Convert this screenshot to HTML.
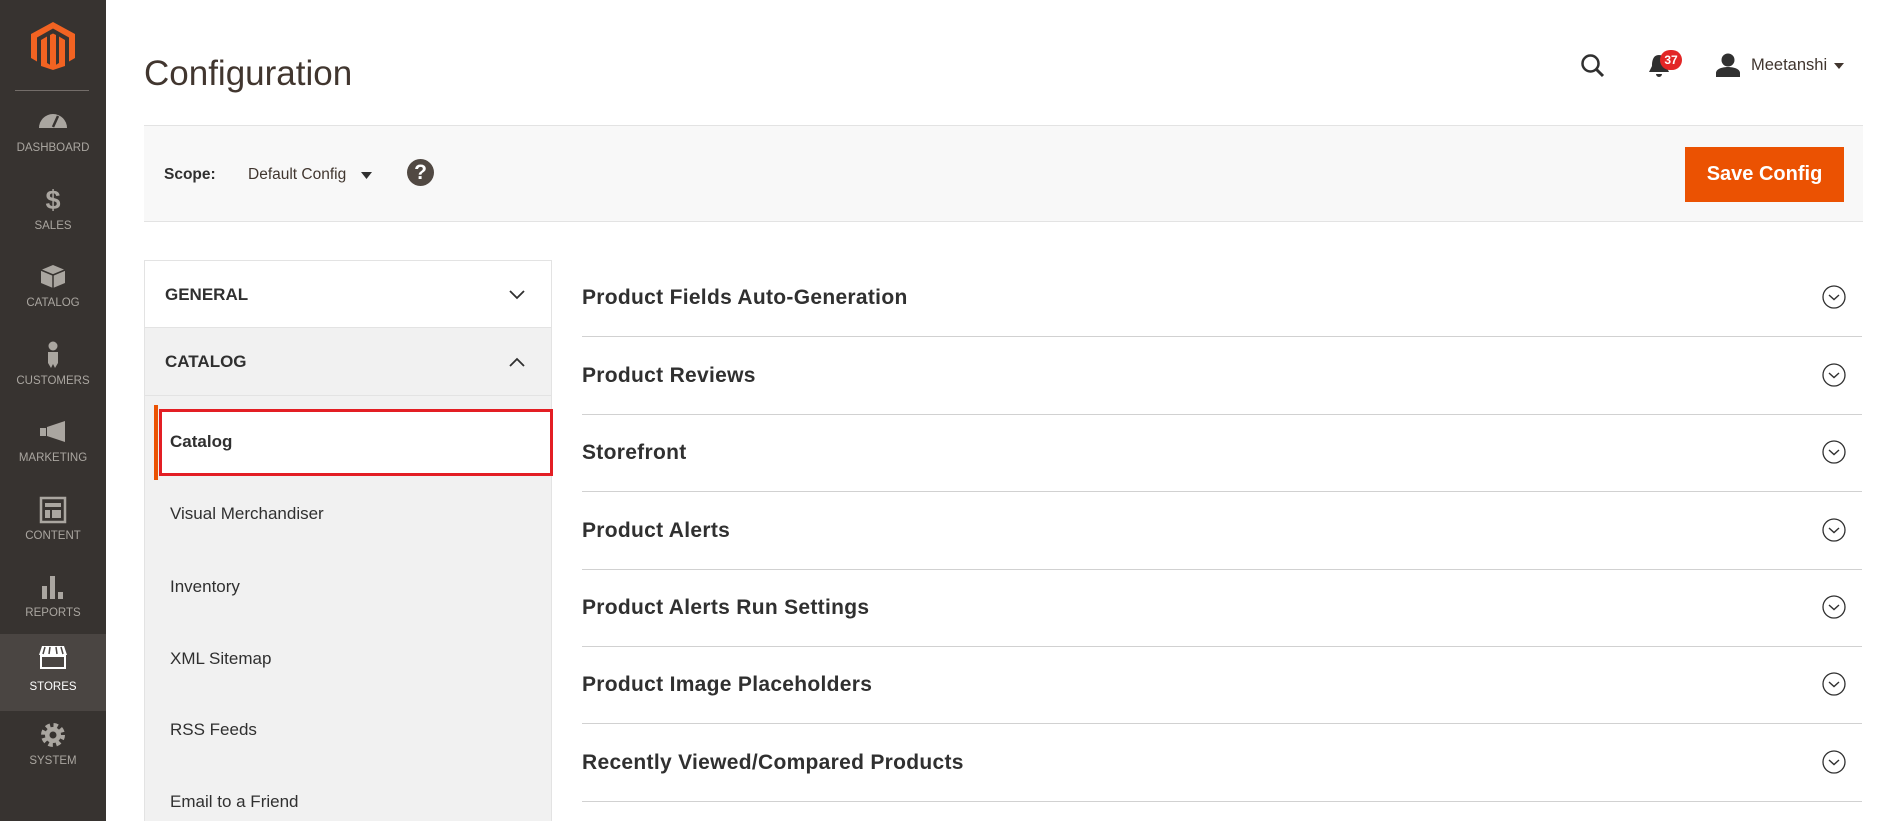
<!DOCTYPE html>
<html><head><meta charset="utf-8"><style>
*{margin:0;padding:0;box-sizing:border-box}
body{width:1886px;height:821px;overflow:hidden;background:#fff;font-family:"Liberation Sans",sans-serif;color:#303030;position:relative}
.sb{position:absolute;left:0;top:0;width:106px;height:821px;background:#373330}
.sep{position:absolute;left:15px;top:90px;width:74px;height:1px;background:#736d69}
.nav{position:absolute;left:0;width:106px;height:78px;text-align:center;color:#aaa6a0;font-size:11.5px}
.nav svg{position:absolute;left:38px;top:10px}
.nav span{position:absolute;left:0;right:0;bottom:22px}
.nav.act{background:#4a4542;color:#fff}
.nav.act span{bottom:18px}
.abs{position:absolute}
h1{position:absolute;left:144px;top:54px;font-size:35px;font-weight:normal;color:#41362f}
.bar{position:absolute;left:144px;top:125px;width:1719px;height:97px;background:#f8f8f8;border-top:1px solid #e3e3e3;border-bottom:1px solid #e3e3e3}
.btn{position:absolute;left:1685px;top:147px;width:159px;height:55px;background:#eb5202;color:#fff;font-size:20px;font-weight:bold;text-align:center;line-height:55px}
.lp{position:absolute;left:144px;top:260px;width:408px;height:561px;background:#f1f1f1;border:1px solid #e3e3e3;border-bottom:none}
.grp{position:absolute;left:0;width:406px;height:67px;font-weight:bold;font-size:17px;color:#303030;padding-left:20px;line-height:67px;border-bottom:1px solid #e3e3e3}
.sub{position:absolute;left:170px;font-size:17px;color:#303030}
.row{position:absolute;left:582px;width:1280px;border-bottom:1px solid #d1d1d1;height:78px}
.row b{position:absolute;left:0;top:39px;transform:translateY(-50%);font-size:21px;color:#303030;letter-spacing:.3px}
.row svg{position:absolute;right:16px;top:26px}
</style></head><body>
<div class="sb">
<svg class="abs" style="left:31px;top:22px" width="44" height="48" viewBox="0 0 44 48"><path d="M22 0L44 12V36L38 39.5V15.5L22 6.5L6 15.5V39.5L0 36V12Z" fill="#f26322"/><path d="M10 18L16 14.5V41L22 44.5L28 41V14.5L34 18V44L22 48L10 44Z" fill="#f26322"/><path d="M19 13L22 11.5L25 13V45L22 46.5L19 45Z" fill="#f26322"/></svg>
<div class="sep"></div>
<div class="nav" style="top:98px"><svg width="30" height="22" viewBox="0 0 30 22"><path d="M1 20A14 14 0 0 1 29 20Z" fill="#aaa6a0"/><path d="M15 19L20 8" stroke="#373330" stroke-width="2.5"/></svg><span>DASHBOARD</span></div>
<div class="nav" style="top:176px"><svg width="30" height="26" viewBox="0 0 30 26"><text x="15" y="23" text-anchor="middle" font-size="27" font-weight="bold" fill="#aaa6a0" font-family="Liberation Sans">$</text></svg><span>SALES</span></div>
<div class="nav" style="top:253px"><svg width="30" height="26" viewBox="0 0 30 26"><path d="M3 7L15 2L27 7V20L15 25L3 20Z" fill="#aaa6a0"/><path d="M3 7L15 12L27 7M15 12V25" stroke="#373330" stroke-width="1.5" fill="none"/></svg><span>CATALOG</span></div>
<div class="nav" style="top:331px"><svg width="30" height="28" viewBox="0 0 30 28"><circle cx="15" cy="5" r="4.5" fill="#aaa6a0"/><path d="M10 11H20V22L17 27L15 23L13 27L10 22Z" fill="#aaa6a0"/></svg><span>CUSTOMERS</span></div>
<div class="nav" style="top:408px"><svg width="30" height="26" viewBox="0 0 30 26"><path d="M2 10H8V18H2Z M9 9L27 3V24L9 18Z" fill="#aaa6a0"/></svg><span>MARKETING</span></div>
<div class="nav" style="top:486px"><svg width="30" height="28" viewBox="0 0 30 28"><rect x="3" y="2" width="24" height="24" fill="none" stroke="#aaa6a0" stroke-width="2.5"/><rect x="7" y="7" width="16" height="4" fill="#aaa6a0"/><rect x="7" y="14" width="5" height="8" fill="#aaa6a0"/><rect x="14" y="14" width="9" height="8" fill="#aaa6a0"/></svg><span>CONTENT</span></div>
<div class="nav" style="top:563px"><svg width="30" height="28" viewBox="0 0 30 28"><rect x="4" y="13" width="5" height="13" fill="#aaa6a0"/><rect x="12" y="3" width="5" height="23" fill="#aaa6a0"/><rect x="20" y="19" width="5" height="7" fill="#aaa6a0"/></svg><span>REPORTS</span></div>
<div class="nav act" style="top:634px;height:77px"><svg width="30" height="26" viewBox="0 0 30 26"><path d="M4 2H26L29 11H1Z" fill="#fff"/><path d="M7 3L5 10M12 3L11 10M18 3L19 10M23 3L25 10" stroke="#4a4542" stroke-width="1.5"/><path d="M3 12H27V24H3Z" fill="none" stroke="#fff" stroke-width="2"/></svg><span>STORES</span></div>
<div class="nav" style="top:711px"><svg width="30" height="28" viewBox="0 0 30 28"><circle cx="15" cy="14" r="9" fill="none" stroke="#aaa6a0" stroke-width="6" stroke-dasharray="4 3.1"/><circle cx="15" cy="14" r="8" fill="#aaa6a0"/><circle cx="15" cy="14" r="3.5" fill="#373330"/></svg><span>SYSTEM</span></div>
</div>

<h1>Configuration</h1>
<svg class="abs" style="left:1580px;top:53px" width="26" height="26" viewBox="0 0 26 26"><circle cx="10.5" cy="10.5" r="8" fill="none" stroke="#303030" stroke-width="2.5"/><path d="M16.5 16.5L23 23" stroke="#303030" stroke-width="3"/></svg>
<svg class="abs" style="left:1647px;top:53px" width="24" height="26" viewBox="0 0 24 26"><path d="M12 2C6 2 5 8 5 13L2 19H22L19 13C19 8 18 2 12 2Z M9 21A3 3 0 0 0 15 21Z" fill="#303030"/></svg>
<div class="abs" style="left:1660px;top:50px;width:22px;height:20px;border-radius:10px;background:#e22626;color:#fff;font-size:12px;font-weight:bold;text-align:center;line-height:20px">37</div>
<svg class="abs" style="left:1715px;top:52px" width="26" height="26" viewBox="0 0 26 26"><circle cx="13" cy="8" r="6.5" fill="#303030"/><path d="M1 25V21C1 17 7 15 13 15C19 15 25 17 25 21V25Z" fill="#303030"/></svg>
<div class="abs" style="left:1751px;top:56px;font-size:16.5px;color:#41362f">Meetanshi</div>
<svg class="abs" style="left:1834px;top:63px" width="10" height="6"><path d="M0 0H10L5 6Z" fill="#41362f"/></svg>

<div class="bar"></div>
<div class="abs" style="left:164px;top:166px;font-size:15.5px;font-weight:bold;color:#303030">Scope:</div>
<div class="abs" style="left:248px;top:166px;font-size:15.5px;color:#41362f">Default Config</div>
<svg class="abs" style="left:361px;top:172px" width="11" height="7"><path d="M0 0H11L5.5 7Z" fill="#303030"/></svg>
<div class="abs" style="left:407px;top:159px;width:27px;height:27px;border-radius:50%;background:#514943;color:#fff;font-weight:bold;font-size:21px;text-align:center;line-height:27px">?</div>
<div class="btn">Save Config</div>

<div class="lp">
<div class="grp" style="top:0;background:#fff">GENERAL<svg class="abs" style="left:364px;top:29px" width="16" height="10"><path d="M1 1L8 8L15 1" fill="none" stroke="#303030" stroke-width="1.8"/></svg></div>
<div class="grp" style="top:67px;height:68px;line-height:68px">CATALOG<svg class="abs" style="left:364px;top:29px" width="16" height="10"><path d="M1 9L8 2L15 9" fill="none" stroke="#303030" stroke-width="1.8"/></svg></div>
</div>
<div class="abs" style="left:154px;top:405px;width:4px;height:75px;background:#eb5202"></div>
<div class="abs" style="left:159px;top:409px;width:394px;height:67px;background:#fff;border:3px solid #e31e24"></div>
<div class="sub" style="top:432px;left:170px;font-weight:bold;color:#303030">Catalog</div>
<div class="sub" style="top:504px">Visual Merchandiser</div>
<div class="sub" style="top:577px">Inventory</div>
<div class="sub" style="top:649px">XML Sitemap</div>
<div class="sub" style="top:720px">RSS Feeds</div>
<div class="sub" style="top:792px">Email to a Friend</div>

<div class="row" style="top:259px"><b>Product Fields Auto-Generation</b><svg width="24" height="24" viewBox="0 0 24 24"><circle cx="12" cy="12" r="11" fill="none" stroke="#303030" stroke-width="1.3"/><path d="M7 10L12 14.5L17 10" fill="none" stroke="#303030" stroke-width="1.4"/></svg></div>
<div class="row" style="top:337px"><b>Product Reviews</b><svg width="24" height="24" viewBox="0 0 24 24"><circle cx="12" cy="12" r="11" fill="none" stroke="#303030" stroke-width="1.3"/><path d="M7 10L12 14.5L17 10" fill="none" stroke="#303030" stroke-width="1.4"/></svg></div>
<div class="row" style="top:414px"><b>Storefront</b><svg width="24" height="24" viewBox="0 0 24 24"><circle cx="12" cy="12" r="11" fill="none" stroke="#303030" stroke-width="1.3"/><path d="M7 10L12 14.5L17 10" fill="none" stroke="#303030" stroke-width="1.4"/></svg></div>
<div class="row" style="top:492px"><b>Product Alerts</b><svg width="24" height="24" viewBox="0 0 24 24"><circle cx="12" cy="12" r="11" fill="none" stroke="#303030" stroke-width="1.3"/><path d="M7 10L12 14.5L17 10" fill="none" stroke="#303030" stroke-width="1.4"/></svg></div>
<div class="row" style="top:569px"><b>Product Alerts Run Settings</b><svg width="24" height="24" viewBox="0 0 24 24"><circle cx="12" cy="12" r="11" fill="none" stroke="#303030" stroke-width="1.3"/><path d="M7 10L12 14.5L17 10" fill="none" stroke="#303030" stroke-width="1.4"/></svg></div>
<div class="row" style="top:646px"><b>Product Image Placeholders</b><svg width="24" height="24" viewBox="0 0 24 24"><circle cx="12" cy="12" r="11" fill="none" stroke="#303030" stroke-width="1.3"/><path d="M7 10L12 14.5L17 10" fill="none" stroke="#303030" stroke-width="1.4"/></svg></div>
<div class="row" style="top:724px"><b>Recently Viewed/Compared Products</b><svg width="24" height="24" viewBox="0 0 24 24"><circle cx="12" cy="12" r="11" fill="none" stroke="#303030" stroke-width="1.3"/><path d="M7 10L12 14.5L17 10" fill="none" stroke="#303030" stroke-width="1.4"/></svg></div>
</body></html>
